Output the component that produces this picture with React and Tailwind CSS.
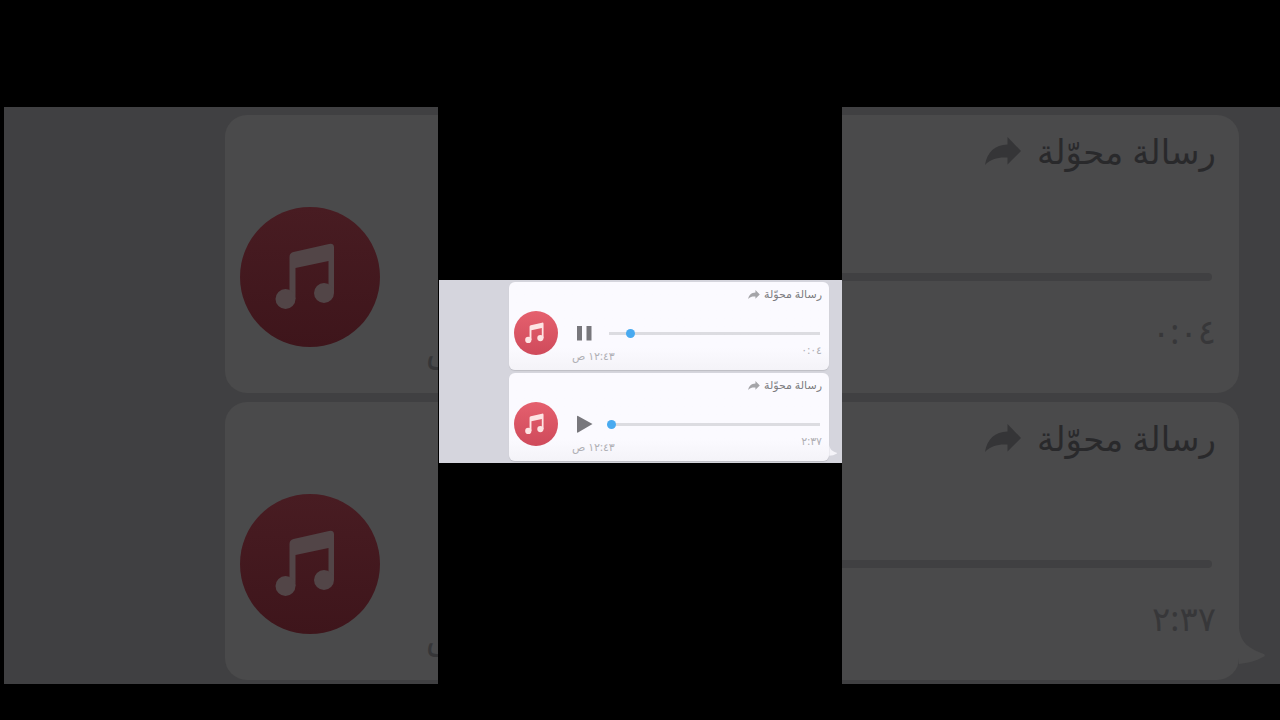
import React from 'react';

const messages = [
  { id: 'first', playing: true, position: 4, length: 42, time: '٠:٠٤', sentAt: '١٢:٤٣ ص', tail: false },
  { id: 'second', playing: false, position: 0, length: 157, time: '٢:٣٧', sentAt: '١٢:٤٣ ص', tail: true },
];

function MusicNote({ className }) {
  return (
    <svg className={className} viewBox="0 0 140 140" fill="currentColor" aria-hidden="true">
      <path d="M49.500 50 Q49.500 46 53.500 45 L89 37 Q94 36 94 40.500 V86 H88.500 V54 L55.500 61 V92 H49.500 Z" />
      <circle cx="45.500" cy="92" r="10" />
      <circle cx="84" cy="86" r="10" />
    </svg>
  );
}

function ForwardArrow({ className }) {
  return (
    <svg className={className} viewBox="0 0 36 28" fill="currentColor" aria-hidden="true">
      <path d="M22.500 0 L36 14 L22.500 27.500 V20.500 C13 20 6 21.500 0 28 C2 15 10 8 22.500 7.500 Z" />
    </svg>
  );
}

function Tail({ className }) {
  return (
    <svg className={className} viewBox="0 0 28 40" fill="currentColor" aria-hidden="true">
      <path d="M0 0 C2 15 9 20 25 26 Q27 28 24 29 C17 33 9 35 0 36 Z" />
    </svg>
  );
}

function AudioMessage({ message }) {
  return (
    <article className="relative rounded-md bg-linear-to-b from-[#fbfaff] from-75% to-[#f4f3f8] pb-[6px] pl-[5px] pr-[7px] pt-1 shadow-[0_1px_1px_#bdbdc4]">
      <div className="flex items-center justify-end gap-1 text-[#7c7c80]">
        <ForwardArrow className="h-[9px] w-3 text-[#a5a5a9]" />
        <p dir="rtl" className="text-[11px] leading-4">رسالة محوّلة</p>
      </div>

      <div className="mt-[9px] flex items-start gap-[14px]">
        <div className="size-11 shrink-0 rounded-full bg-linear-to-b from-[#e5606e] to-[#cf4a5b]">
          <MusicNote className="size-11 text-[#fde3e3]" />
        </div>
        <div className="mt-[13px] min-w-0 flex-1">
          <div className="flex h-[18px] items-center pr-[2px]">
            <button type="button" aria-label={message.playing ? 'إيقاف' : 'تشغيل'} className="w-[35px] shrink-0 pl-1 text-[#78777c]">
              <svg className="h-[18px] w-[18px]" viewBox="0 0 18 18" fill="currentColor" aria-hidden="true">
                {message.playing ? (
                  <path d="M1 2 H6 V16.500 H1 Z M10.500 2 H15.500 V16.500 H10.500 Z" />
                ) : (
                  <path d="M1 1.500 Q1 0.500 2 1 L16.500 9 L2 17.500 Q1 18 1 17 Z" />
                )}
              </svg>
            </button>
            <input
              type="range"
              min={0}
              max={message.length}
              defaultValue={message.position}
              aria-label="موضع التشغيل"
              className="h-[9px] min-w-0 flex-1 appearance-none bg-linear-to-r from-[#dcdce1] to-[#dcdce1] bg-[length:calc(100%-2px)_3px] bg-right bg-no-repeat [&::-webkit-slider-thumb]:size-[9px] [&::-webkit-slider-thumb]:appearance-none [&::-webkit-slider-thumb]:rounded-full [&::-webkit-slider-thumb]:bg-[#49aaf0]"
            />
          </div>
          <div className="flex items-start justify-between text-[11px] leading-4 text-[#b0b0b5]">
            <time dir="rtl" className="mt-[6px]">{message.sentAt}</time>
            <span dir="rtl">{message.time}</span>
          </div>
        </div>
      </div>
      {message.tail && <Tail className="absolute bottom-1 left-full h-3 w-[9px] text-[#f5f4f9]" />}
    </article>
  );
}

// Dimmed, enlarged start of a message
function BackdropStart({ message }) {
  return (
    <div className="flex h-[278px] items-start rounded-l-[22px] bg-[#4a4a4b] pl-[15px] pt-[92px]">
      <div className="size-[140px] shrink-0 rounded-full bg-linear-to-b from-[#481c22] to-[#3e151b]">
        <MusicNote className="size-[140px] text-[#524547]" />
      </div>
      <time dir="rtl" className="ml-[46px] mt-[122px] shrink-0 whitespace-nowrap text-[34px] leading-10 text-[#363638]">
        {message.sentAt}
      </time>
    </div>
  );
}

// Dimmed, enlarged end of a message
function BackdropEnd({ message }) {
  return (
    <div className="relative -ml-8 mr-[41px] h-[278px] rounded-r-[22px] bg-[#4a4a4b] pr-[23px] pt-4">
      <div className="flex items-center justify-end gap-4 text-[#29292b]">
        <ForwardArrow className="h-7 w-9 text-[#353537]" />
        <p dir="rtl" className="text-[34px] leading-10">رسالة محوّلة</p>
      </div>
      <div className="mt-[102px] flex pr-1">
        <input
          type="range"
          min={0}
          max={message.length}
          defaultValue={0}
          tabIndex={-1}
          aria-label="موضع التشغيل"
          className="h-2 min-w-0 flex-1 appearance-none rounded-full bg-[#404042] [&::-webkit-slider-thumb]:size-2 [&::-webkit-slider-thumb]:appearance-none"
        />
      </div>
      <p dir="rtl" className="mt-[30px] text-[34px] leading-10 text-[#373739]">{message.time}</p>
      {message.tail && <Tail className="absolute bottom-3 left-full h-10 w-7 text-[#4a4a4b]" />}
    </div>
  );
}

export default function App() {
  return (
    <main className="grid min-h-screen grid-cols-[1fr_404px_1fr] items-start overflow-hidden bg-black font-['Noto_Sans','DejaVu_Sans',sans-serif]">
      <div aria-hidden="true" className="ml-1 mt-[107px] overflow-hidden bg-[#404042] pb-1 pl-[221px] pt-2">
        <div className="flex flex-col gap-[9px]">
          {messages.map((message) => (
            <BackdropStart key={message.id} message={message} />
          ))}
        </div>
      </div>

      <section className="ml-px mt-[280px] flex flex-col gap-[3px] bg-[#d5d5dd] pb-[2px] pl-[70px] pr-[13px] pt-[2px]">
        {messages.map((message) => (
          <AudioMessage key={message.id} message={message} />
        ))}
      </section>

      <div aria-hidden="true" className="mt-[107px] overflow-hidden bg-[#404042] pb-1 pt-2">
        <div className="flex flex-col gap-[9px]">
          {messages.map((message) => (
            <BackdropEnd key={message.id} message={message} />
          ))}
        </div>
      </div>
    </main>
  );
}
